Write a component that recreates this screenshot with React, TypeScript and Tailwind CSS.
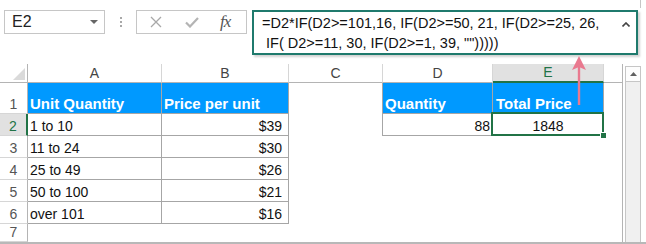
import React from "react";

const FONT = "font-['Liberation_Sans',Arial,sans-serif]";

const ROWS = [
  { n: 1, a: "Unit Quantity", b: "Price per unit", head: true },
  { n: 2, a: "1 to 10", b: "$39" },
  { n: 3, a: "11 to 24", b: "$30" },
  { n: 4, a: "25 to 49", b: "$26" },
  { n: 5, a: "50 to 100", b: "$21" },
  { n: 6, a: "over 101", b: "$16" },
];

function RowHead({ n, active }: { n: number; active?: boolean }) {
  return (
    <div
      className={[
        "w-[28px] shrink-0 flex items-end justify-center border-b border-[#d6d6d6] text-[14px] leading-[17px]",
        active
          ? "bg-[#e1e1e1] text-[#217346] border-r-2 border-r-[#217346]"
          : "text-[#555] border-r border-r-[#b4b4b4]",
      ].join(" ")}
    >
      {n}
    </div>
  );
}

function ColHead({ label, w, active }: { label: string; w: string; active?: boolean }) {
  return (
    <div
      className={[
        w,
        "shrink-0 flex items-center justify-center border-r border-[#d6d6d6] text-[14px]",
        active
          ? "bg-[#e1e1e1] text-[#217346] border-b-2 border-b-[#217346]"
          : "text-[#444] border-b border-b-[#b4b4b4]",
      ].join(" ")}
    >
      {label}
    </div>
  );
}

export default function App() {
  return (
    <div className={`relative w-[646px] h-[244px] overflow-hidden bg-white ${FONT}`}>
      {/* formula bar row */}
      <div className="h-[64px] flex items-start pt-[10px] pl-[4px]">
        <div className="w-[101px] h-[24px] shrink-0 border border-[#c6c6c6] flex items-center justify-between pl-[7px] pr-[6px] text-[16px] text-[#222]">
          <span>E2</span>
          <svg width="8" height="4" viewBox="0 0 8 4">
            <polygon points="0,0 8,0 4,4" fill="#666" />
          </svg>
        </div>
        <div className="w-[31px] shrink-0 flex flex-col items-center gap-[2px] pt-[7px]">
          <span className="w-[2px] h-[2px] bg-[#a8a8a8]" />
          <span className="w-[2px] h-[2px] bg-[#a8a8a8]" />
          <span className="w-[2px] h-[2px] bg-[#a8a8a8]" />
        </div>
        <div className="w-[111px] h-[24px] shrink-0 border border-[#c6c6c6] flex items-center pl-[13px]">
          <svg width="12" height="12" viewBox="0 0 12 12">
            <path d="M1 1 L11 11 M11 1 L1 11" stroke="#a8a8a8" strokeWidth="1.3" />
          </svg>
          <svg width="14" height="11" viewBox="0 0 14 11" className="ml-[23px]">
            <path d="M1 5.5 L5 9.5 L13 1" stroke="#b4b4b4" strokeWidth="2.2" fill="none" />
          </svg>
          <span className="ml-[21px] font-['Liberation_Serif',serif] italic text-[17px] text-[#555] tracking-[-1px]">
            fx
          </span>
        </div>
        <div className="ml-[5px] w-[386px] h-[45px] shrink-0 border-2 border-[#1f7a6d] shadow-[2px_2px_2px_rgba(0,0,0,0.18)] flex pl-[8px] pr-[6px] pt-[1px] text-[14.5px] leading-[20px] text-[#111]">
          <div className="flex-1 whitespace-pre">
            {"=D2*IF(D2>=101,16, IF(D2>=50, 21, IF(D2>=25, 26,\n IF( D2>=11, 30, IF(D2>=1, 39, \"\")))))"}
          </div>
          <svg width="8" height="5" viewBox="0 0 8 5" className="mt-[9px]">
            <path d="M0.5 4.5 L4 1 L7.5 4.5" stroke="#444" strokeWidth="1.6" fill="none" />
          </svg>
        </div>
        <div className="ml-[2px] w-[1px] h-[8px] -mt-[10px] bg-[#c6c6c6]" />
      </div>

      {/* sheet + scrollbar */}
      <div className="flex h-[180px] border-b-2 border-[#b8b8b8]">
        <div className="w-[623px] shrink-0 flex flex-col border-r border-[#b4b4b4]">
          {/* column headers */}
          <div className="h-[19px] flex shrink-0">
            <div className="w-[28px] shrink-0 flex items-end justify-end pr-[2px] pb-[2px] border-r border-b border-[#b4b4b4]">
              <svg width="12" height="12" viewBox="0 0 12 12">
                <polygon points="12,0 12,12 0,12" fill="#dadada" />
              </svg>
            </div>
            <ColHead label="A" w="w-[134px]" />
            <ColHead label="B" w="w-[127px]" />
            <ColHead label="C" w="w-[94px]" />
            <ColHead label="D" w="w-[110px]" />
            <ColHead label="E" w="w-[111px]" active />
            <div className="w-[18px] shrink-0 border-b border-[#b4b4b4]" />
          </div>

          {ROWS.map((r) => {
            const h = r.head ? "h-[31px]" : "h-[22px]";
            const hd = r.head
              ? "bg-[#0099ff] text-white font-bold text-[15px] pb-[1px]"
              : "text-[#111] text-[14px]";
            return (
              <div key={r.n} className={`${h} flex shrink-0`}>
                <RowHead n={r.n} active={r.n === 2} />
                <div className={`w-[134px] shrink-0 flex items-end pl-[2px] leading-[17px] border-r border-b border-[#a6a6a6] ${hd}`}>
                  {r.a}
                </div>
                <div
                  className={`w-[127px] shrink-0 flex items-end leading-[17px] border-r border-b border-[#a6a6a6] ${hd} ${
                    r.head ? "pl-[2px]" : "justify-end pr-[6px]"
                  }`}
                >
                  {r.b}
                </div>
                <div
                  className={`w-[94px] shrink-0 ${r.n <= 2 ? "border-r border-[#a6a6a6]" : ""}`}
                />
                {r.n === 1 && (
                  <>
                    <div className="w-[110px] shrink-0 flex items-end pl-[2px] pb-[1px] leading-[17px] bg-[#0099ff] text-white font-bold text-[15px] border-r border-b border-[#a6a6a6]">
                      Quantity
                    </div>
                    <div className="w-[111px] shrink-0 flex items-end pl-[3px] pb-[1px] leading-[17px] bg-[#0099ff] text-white font-bold text-[15px] border-r border-b border-[#a6a6a6]">
                      Total Price
                    </div>
                  </>
                )}
                {r.n === 2 && (
                  <>
                    <div className="w-[110px] shrink-0 flex items-end justify-end pr-[2px] leading-[17px] text-[14px] text-[#111] border-r border-b border-[#a6a6a6]">
                      88
                    </div>
                    <div className="relative w-[111px] shrink-0 flex items-end justify-center leading-[17px] text-[14px] text-[#111] border-r border-b border-[#a6a6a6]">
                      1848
                      <div className="absolute -left-[2px] -top-[2px] -right-[1px] -bottom-[1px] border-2 border-[#217346]" />
                      <div className="absolute -right-[3px] -bottom-[3px] w-[5px] h-[5px] bg-[#217346] outline outline-1 outline-white" />
                    </div>
                  </>
                )}
                {r.n > 2 && (
                  <>
                    <div className="w-[110px] shrink-0" />
                    <div className="w-[111px] shrink-0" />
                  </>
                )}
              </div>
            );
          })}

          <div className="flex-1 flex">
            <RowHead n={7} />
          </div>
        </div>

        {/* vertical scrollbar */}
        <div className="ml-[2px] w-[16px] shrink-0 pt-[2px] flex flex-col">
          <div className="flex-1 bg-[#f0f0f0] border-x border-t border-[#c6c6c6] flex flex-col">
            <div className="h-[15px] bg-[#fdfdfd] border-b border-[#c6c6c6] flex items-center justify-center">
              <svg width="7" height="4" viewBox="0 0 7 4">
                <polygon points="0,4 7,4 3.5,0" fill="#606060" />
              </svg>
            </div>
          </div>
        </div>
      </div>

      {/* pink callout arrow from E2 to the formula bar */}
      <svg
        className="absolute left-[572px] top-[56px]"
        width="14"
        height="50"
        viewBox="0 0 14 50"
      >
        <line x1="7" y1="10" x2="7" y2="49" stroke="#e9798f" strokeWidth="2.4" />
        <polygon points="7,0 14,14 7,11 0,14" fill="#e9798f" />
      </svg>
    </div>
  );
}
